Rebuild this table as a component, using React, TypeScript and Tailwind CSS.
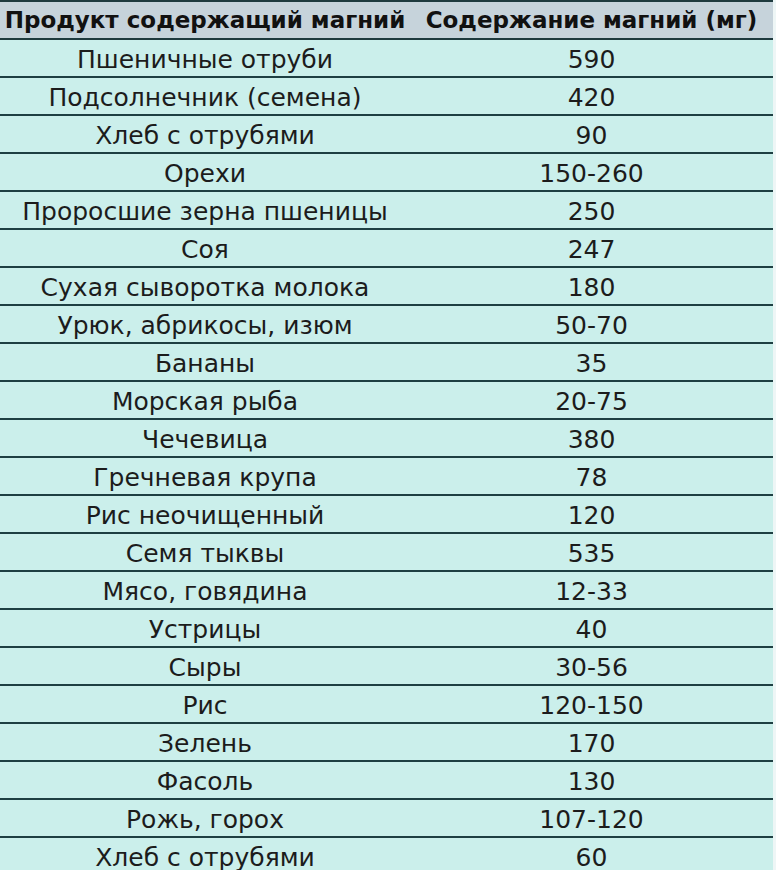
import React from "react";

const rows: [string, string][] = [
  ["Пшеничные отруби", "590"],
  ["Подсолнечник (семена)", "420"],
  ["Хлеб с отрубями", "90"],
  ["Орехи", "150-260"],
  ["Проросшие зерна пшеницы", "250"],
  ["Соя", "247"],
  ["Сухая сыворотка молока", "180"],
  ["Урюк, абрикосы, изюм", "50-70"],
  ["Бананы", "35"],
  ["Морская рыба", "20-75"],
  ["Чечевица", "380"],
  ["Гречневая крупа", "78"],
  ["Рис неочищенный", "120"],
  ["Семя тыквы", "535"],
  ["Мясо, говядина", "12-33"],
  ["Устрицы", "40"],
  ["Сыры", "30-56"],
  ["Рис", "120-150"],
  ["Зелень", "170"],
  ["Фасоль", "130"],
  ["Рожь, горох", "107-120"],
  ["Хлеб с отрубями", "60"],
];

export default function App() {
  return (
    <div className="w-[776px] h-[870px] overflow-hidden bg-[#eef6f6]">
      <div
        className="w-[773px] text-[#1c1c1c]"
        style={{ fontFamily: '"DejaVu Sans", Verdana, sans-serif' }}
      >
        <div className="grid grid-cols-[410px_363px] h-[40px] items-center bg-[#c6d3db] border-t-2 border-b-2 border-[#1e3a3e] font-bold text-[23px] text-[#111]">
          <div className="text-center whitespace-nowrap">Продукт содержащий магний</div>
          <div className="text-center whitespace-nowrap">Содержание магний (мг)</div>
        </div>
        {rows.map(([name, val], i) => (
          <div
            key={i}
            className="grid grid-cols-[410px_363px] h-[38px] items-start bg-[#cbefeb] border-b-2 border-[#1e3f42] text-[25px] leading-[39px]"
          >
            <div className="text-center whitespace-nowrap">{name}</div>
            <div className="text-center whitespace-nowrap">{val}</div>
          </div>
        ))}
      </div>
    </div>
  );
}
